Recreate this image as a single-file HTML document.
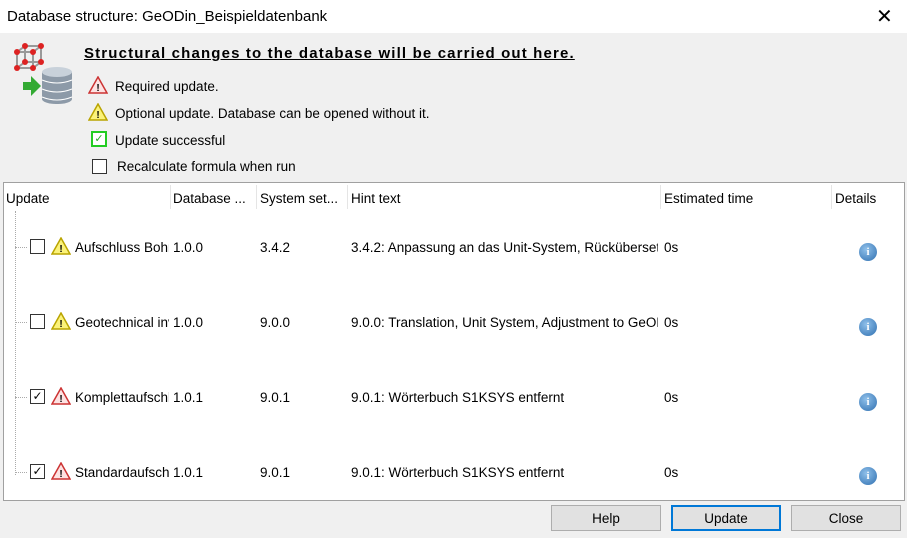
<html><head><style>
body{margin:0;width:907px;height:538px;background:#f0f0f0;font-family:"Liberation Sans",sans-serif;font-size:13.5px;color:#000;position:relative;overflow:hidden}
.a{position:absolute;white-space:nowrap}
.tb{left:0;top:0;width:907px;height:33px;background:#fff}
.grid{left:3px;top:182px;width:900px;height:317px;background:#fff;border:1px solid #a0a0a0}
.hs{position:absolute;top:2px;width:1px;height:24px;background:#e5e5e5}
.cb{position:absolute;width:13px;height:13px;border:1px solid #333;background:#fff}
.btn{position:absolute;top:505px;height:26px;background:#e1e1e1;border:1px solid #adadad;text-align:center;line-height:26px;box-sizing:border-box}
.info{position:absolute;width:18px;height:18px;border-radius:50%;background:radial-gradient(circle at 40% 35%,#8fc0ea,#2f6fb0);color:#fff;font-size:11px;font-weight:bold;text-align:center;line-height:18px;font-family:"Liberation Serif",serif}
</style></head><body>
<div class="a tb"></div>
<div class="a" style="left:7px;top:8px;font-size:15px">Database structure: GeODin_Beispieldatenbank</div>
<div class="a" style="left:876px;top:4px;font-size:20px;font-weight:300">✕</div>
<svg class="a" style="left:13px;top:42px" width="62" height="66">
<g stroke="#999" stroke-width="2" fill="none"><rect x="4" y="10" width="16" height="16"/><rect x="12" y="4" width="16" height="16"/><line x1="4" y1="10" x2="12" y2="4"/><line x1="20" y1="10" x2="28" y2="4"/><line x1="20" y1="26" x2="28" y2="20"/><line x1="4" y1="26" x2="12" y2="20"/></g>
<g fill="#d22"><circle cx="4" cy="10" r="3"/><circle cx="20" cy="10" r="3"/><circle cx="12" cy="4" r="3"/><circle cx="28" cy="4" r="3"/><circle cx="4" cy="26" r="3"/><circle cx="20" cy="26" r="3"/><circle cx="12" cy="20" r="3"/><circle cx="28" cy="20" r="3"/></g>
<path d="M10 40h8v-6l10 10-10 10v-6h-8z" fill="#3a3"/>
<rect x="29" y="26" width="30" height="36" rx="14" ry="5" fill="#8d9aa8"/>
<ellipse cx="44" cy="30" rx="15" ry="5" fill="#c8d1da"/>
<g stroke="#fff" stroke-width="1" fill="none"><path d="M29 38q15 6 30 0M29 47q15 6 30 0M29 55q15 6 30 0"/></g>
</svg>
<div class="a" style="left:84px;top:45px;font-size:15px;font-weight:bold;text-decoration:underline;letter-spacing:1.15px">Structural changes to the database will be carried out here.</div>
<svg class="a" style="left:88px;top:76px" width="20" height="18"><path d="M10 1L19 17H1z" fill="#fde2e2" stroke="#c33" stroke-width="1.5"/><text x="10" y="15" font-size="10" font-weight="bold" text-anchor="middle" fill="#000">!</text></svg>
<div class="a" style="left:115px;top:79px">Required update.</div>
<svg class="a" style="left:88px;top:103px" width="20" height="18"><path d="M10 1L19 17H1z" fill="#fbf27a" stroke="#b9a400" stroke-width="1.5"/><text x="10" y="15" font-size="10" font-weight="bold" text-anchor="middle">!</text></svg>
<div class="a" style="left:115px;top:106px">Optional update. Database can be opened without it.</div>
<div class="a" style="left:91px;top:131px;width:12px;height:12px;border:2px solid #2c2;background:#fff;color:#2a2;font-size:11px;line-height:12px;text-align:center">✓</div>
<div class="a" style="left:115px;top:133px">Update successful</div>
<div class="cb" style="left:92px;top:159px"></div>
<div class="a" style="left:117px;top:159px">Recalculate formula when run</div>
<div class="a grid">
<div class="hs" style="left:166px"></div><div class="hs" style="left:252px"></div><div class="hs" style="left:343px"></div><div class="hs" style="left:656px"></div><div class="hs" style="left:827px"></div>
<div class="a" style="left:11px;top:28px;height:264px;border-left:1px dotted #aaa"></div>
</div>
<div class="a" style="left:6px;top:191px">Update</div>
<div class="a" style="left:173px;top:191px">Database ...</div>
<div class="a" style="left:260px;top:191px">System set...</div>
<div class="a" style="left:351px;top:191px">Hint text</div>
<div class="a" style="left:664px;top:191px">Estimated time</div>
<div class="a" style="left:835px;top:191px">Details</div>

<div class="a" style="left:15px;top:247px;width:12px;border-top:1px dotted #aaa"></div>
<div class="cb" style="left:30px;top:239px"></div>
<svg class="a" style="left:51px;top:237px" width="20" height="18"><path d="M10 1L19 17H1z" fill="#fbf27a" stroke="#b9a400" stroke-width="1.5"/><text x="10" y="15" font-size="10" font-weight="bold" text-anchor="middle">!</text></svg>
<div class="a" style="left:75px;top:240px;width:94px;overflow:hidden">Aufschluss Bohrung</div>
<div class="a" style="left:173px;top:240px">1.0.0</div><div class="a" style="left:260px;top:240px">3.4.2</div>
<div class="a" style="left:351px;top:240px;width:307px;overflow:hidden">3.4.2: Anpassung an das Unit-System, Rückübersetzung</div>
<div class="a" style="left:664px;top:240px">0s</div><div class="info" style="left:859px;top:243px">i</div>

<div class="a" style="left:15px;top:322px;width:12px;border-top:1px dotted #aaa"></div>
<div class="cb" style="left:30px;top:314px"></div>
<svg class="a" style="left:51px;top:312px" width="20" height="18"><path d="M10 1L19 17H1z" fill="#fbf27a" stroke="#b9a400" stroke-width="1.5"/><text x="10" y="15" font-size="10" font-weight="bold" text-anchor="middle">!</text></svg>
<div class="a" style="left:75px;top:315px;width:94px;overflow:hidden">Geotechnical investigation</div>
<div class="a" style="left:173px;top:315px">1.0.0</div><div class="a" style="left:260px;top:315px">9.0.0</div>
<div class="a" style="left:351px;top:315px;width:307px;overflow:hidden">9.0.0: Translation, Unit System, Adjustment to GeODin</div>
<div class="a" style="left:664px;top:315px">0s</div><div class="info" style="left:859px;top:318px">i</div>

<div class="a" style="left:15px;top:397px;width:12px;border-top:1px dotted #aaa"></div>
<div class="cb" style="left:30px;top:389px;font-size:12px;line-height:13px;text-align:center">✓</div>
<svg class="a" style="left:51px;top:387px" width="20" height="18"><path d="M10 1L19 17H1z" fill="#fde2e2" stroke="#c33" stroke-width="1.5"/><text x="10" y="15" font-size="10" font-weight="bold" text-anchor="middle">!</text></svg>
<div class="a" style="left:75px;top:390px;width:94px;overflow:hidden">Komplettaufschluss</div>
<div class="a" style="left:173px;top:390px">1.0.1</div><div class="a" style="left:260px;top:390px">9.0.1</div>
<div class="a" style="left:351px;top:390px">9.0.1: Wörterbuch S1KSYS entfernt</div>
<div class="a" style="left:664px;top:390px">0s</div><div class="info" style="left:859px;top:393px">i</div>

<div class="a" style="left:15px;top:472px;width:12px;border-top:1px dotted #aaa"></div>
<div class="cb" style="left:30px;top:464px;font-size:12px;line-height:13px;text-align:center">✓</div>
<svg class="a" style="left:51px;top:462px" width="20" height="18"><path d="M10 1L19 17H1z" fill="#fde2e2" stroke="#c33" stroke-width="1.5"/><text x="10" y="15" font-size="10" font-weight="bold" text-anchor="middle">!</text></svg>
<div class="a" style="left:75px;top:465px;width:94px;overflow:hidden">Standardaufschluss</div>
<div class="a" style="left:173px;top:465px">1.0.1</div><div class="a" style="left:260px;top:465px">9.0.1</div>
<div class="a" style="left:351px;top:465px">9.0.1: Wörterbuch S1KSYS entfernt</div>
<div class="a" style="left:664px;top:465px">0s</div><div class="info" style="left:859px;top:467px">i</div>

<div class="btn" style="left:551px;width:110px">Help</div>
<div class="btn" style="left:671px;width:110px;border:2px solid #0078d7;line-height:24px">Update</div>
<div class="btn" style="left:791px;width:110px">Close</div>
</body></html>
